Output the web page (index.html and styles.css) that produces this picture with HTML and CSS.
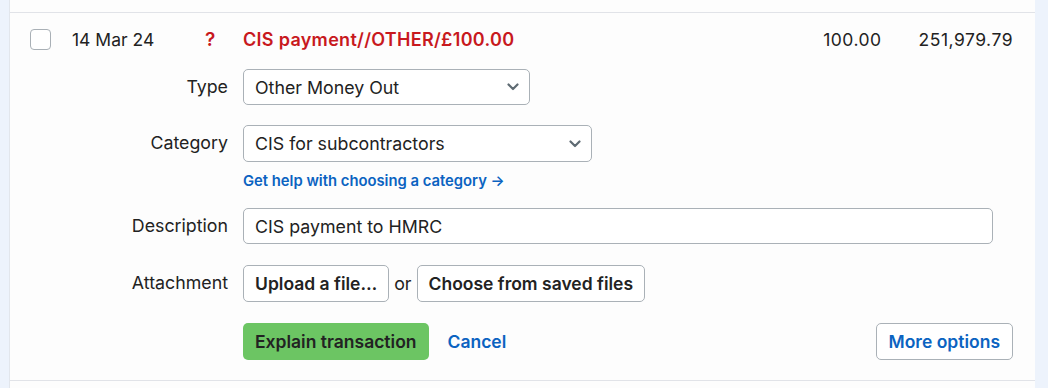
FILE: index.html
```html
<!DOCTYPE html>
<html>
<head>
<meta charset="utf-8">
<link rel="stylesheet" href="styles.css">
</head>
<body>
<div class="page">
  <div class="card">
    <div class="prev-row"></div>
    <div class="txn">
      <div class="txn-head">
        <span class="checkbox"></span>
        <span class="date">14 Mar 24</span>
        <span class="flag">?</span>
        <span class="title">CIS payment//OTHER/£100.00</span>
        <span class="amount">100.00</span>
        <span class="balance">251,979.79</span>
      </div>
      <div class="form">
        <label class="label">Type</label>
        <div class="field f-type">
          <div class="select select-type"><span>Other Money Out</span>
            <svg class="chev" width="12" height="8" viewBox="0 0 12 8"><path d="M1.5 1.5 L6 6 L10.5 1.5" fill="none" stroke="#5f6b73" stroke-width="2.2" stroke-linecap="round" stroke-linejoin="round"/></svg>
          </div>
        </div>

        <label class="label">Category</label>
        <div class="field f-cat">
          <div class="select select-cat"><span>CIS for subcontractors</span>
            <svg class="chev" width="12" height="8" viewBox="0 0 12 8"><path d="M1.5 1.5 L6 6 L10.5 1.5" fill="none" stroke="#5f6b73" stroke-width="2.2" stroke-linecap="round" stroke-linejoin="round"/></svg>
          </div>
          <a class="help">Get help with choosing a category →</a>
        </div>

        <label class="label">Description</label>
        <div class="field f-desc">
          <div class="input">CIS payment to HMRC</div>
        </div>

        <label class="label">Attachment</label>
        <div class="field attach">
          <span class="btn">Upload a file…</span>
          <span class="or">or</span>
          <span class="btn">Choose from saved files</span>
        </div>

        <span class="label"></span>
        <div class="field actions">
          <span class="btn-primary">Explain transaction</span>
          <a class="cancel">Cancel</a>
          <span class="btn-more">More options</span>
        </div>
      </div>
    </div>
  </div>
</div>
</body>
</html>
```
FILE: styles.css
```css
* { box-sizing: border-box; }
html, body { margin: 0; padding: 0; }
body {
  background: #edf3fc;
  font-family: "Inter", "Liberation Sans", sans-serif;
  color: #222;
  width: 1048px;
  height: 388px;
  overflow: hidden;
}
.page {
  padding-left: 9px;
  padding-right: 13px;
  height: 388px;
}
.card {
  background: #fdfdfd;
  border-left: 1px solid #e2e6ec;
  height: 388px;
}
.prev-row { height: 12px; }
.txn {
  border-top: 1px solid #e1e3e8;
  border-bottom: 1px solid #e1e3e8;
  padding: 15px 22px 20px 20px;
  height: 369px;
}
.txn-head {
  display: flex;
  align-items: center;
  height: 22px;
  font-size: 17.5px;
}
.checkbox {
  width: 21px; height: 21px;
  border: 1px solid #a9b0b6;
  border-radius: 4px;
  background: #fff;
  flex: none;
}
.date { margin-left: 21px; width: 133px; }
.flag { color: #c8191e; font-weight: 600; width: 38px; font-size: 19px; }
.title { color: #c8191e; font-weight: 600; flex: 1; font-size: 18px; letter-spacing: 0.3px; }
.amount, .balance { letter-spacing: 0.5px; }
.balance { margin-left: 37px; }
.form {
  display: grid;
  grid-template-columns: 198px 1fr;
  column-gap: 15px;
  row-gap: 0;
  margin-top: 19px;
  font-size: 17.8px;
}
.label {
  text-align: right;
  height: 36px;
  line-height: 36px;
}
.f-type { margin-bottom: 20px; }
.f-cat { margin-bottom: 18px; }
.f-desc { margin-bottom: 21px; }
.attach { margin-bottom: 21px; }
.select, .input {
  height: 36px;
  border: 1px solid #aab1b7;
  border-radius: 5px;
  background: #fff;
  display: flex;
  align-items: center;
  padding: 0 11px;
}
.select { justify-content: space-between; }
.select-type { width: 287px; }
.select-cat { width: 349px; height: 37px; }
.chev { margin-right: -1px; }
.input { width: 750px; }
.help {
  display: block;
  margin-top: 10px;
  line-height: 18px;
  color: #0b63c1;
  font-weight: 600;
  font-size: 14.8px;
}
.attach { display: flex; align-items: center; }
.btn {
  height: 37px;
  border: 1px solid #aab1b7;
  border-radius: 5px;
  background: #fff;
  padding: 0 11px;
  display: flex;
  align-items: center;
  font-weight: 600;
  font-size: 17.5px;
}
.or { margin: 0 5px; }
.actions { display: flex; align-items: center; }
.btn-primary {
  height: 37px;
  background: #6cc563;
  border-radius: 5px;
  padding: 0 12px;
  display: flex;
  align-items: center;
  font-weight: 600;
  font-size: 17.5px;
}
.cancel { color: #0b63c1; font-weight: 600; margin-left: 19px; font-size: 17.5px; }
.btn-more {
  margin-left: auto;
  height: 37px;
  border: 1px solid #aab1b7;
  border-radius: 5px;
  background: #fff;
  padding: 0 12px;
  display: flex;
  align-items: center;
  color: #0b63c1;
  font-weight: 600;
  font-size: 17.5px;
}
```
